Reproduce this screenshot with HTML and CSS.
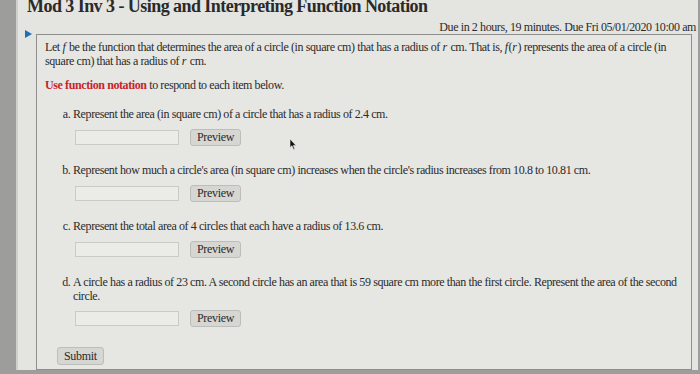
FILE: index.html
```html
<!DOCTYPE html>
<html lang="en">
<head>
    <meta charset="UTF-8">
    <title>Mod 3 Inv 3 - Using and Interpreting Function Notation</title>
    <link rel="stylesheet" href="styles.css">
</head>
<body>
    <div class="page">
        <h1 class="title">Mod 3 Inv 3 - Using and Interpreting Function Notation</h1>

        <div class="due-row">
            <span class="toggle"></span>
            <span class="due">Due in 2 hours, 19 minutes. Due Fri 05/01/2020 10:00 am</span>
        </div>

        <div class="question">
            <p class="intro">Let <i>f</i> be the function that determines the area of a circle (in square cm) that has a radius of <i>r</i> cm. That is, <i>f</i>(<i>r</i>) represents the area of a circle (in square cm) that has a radius of <i>r</i> cm.</p>

            <p class="instruct"><b class="red">Use function notation</b> to respond to each item below.</p>

            <ol class="parts">
                <li>
                    <p>Represent the area (in square cm) of a circle that has a radius of 2.4 cm.</p>
                    <div class="answer">
                        <input type="text" class="ans-input" aria-label="Answer a">
                        <button class="btn">Preview</button>
                    </div>
                </li>
                <li>
                    <p>Represent how much a circle's area (in square cm) increases when the circle's radius increases from 10.8 to 10.81 cm.</p>
                    <div class="answer">
                        <input type="text" class="ans-input" aria-label="Answer b">
                        <button class="btn">Preview</button>
                    </div>
                </li>
                <li>
                    <p>Represent the total area of 4 circles that each have a radius of 13.6 cm.</p>
                    <div class="answer">
                        <input type="text" class="ans-input" aria-label="Answer c">
                        <button class="btn">Preview</button>
                    </div>
                </li>
                <li class="last">
                    <p>A circle has a radius of 23 cm. A second circle has an area that is 59 square cm more than the first circle. Represent the area of the second circle.</p>
                    <div class="answer">
                        <input type="text" class="ans-input" aria-label="Answer d">
                        <button class="btn">Preview</button>
                    </div>
                </li>
            </ol>

            <button class="btn submit">Submit</button>
        </div>
    </div>

    <!-- mouse pointer caught in the shot -->
    <svg class="pointer" width="8" height="11" viewBox="0 0 8 11" aria-hidden="true">
        <path d="M1 0 L1 8.5 L3 6.8 L4.6 10.4 L5.8 9.9 L4.3 6.4 L7 6.4 Z" fill="#111" stroke="#eee" stroke-width="0.6"/>
    </svg>
</body>
</html>
```

FILE: styles.css
```css
* {
    margin: 0;
    padding: 0;
    box-sizing: border-box;
}

body {
    font-family: 'Liberation Serif', 'Times New Roman', serif;
    color: #2b2b2b;
    background-color: #9d9d9b;
    height: 374px;
    overflow: hidden;
    position: relative;
}

.page {
    margin-left: 16px;
    margin-right: 2px;
    height: 374px;
    padding: 0 6px 0 6px;
    background-color: #e4e4e0;
    border-left: 2px solid #cfcfcb;
}

.title {
    font-size: 18px;
    line-height: 20px;
    letter-spacing: -0.55px;
    margin-top: -4px;
    margin-left: 3px;
    color: #2a2a2a;
}

.due-row {
    display: flex;
    align-items: flex-end;
    justify-content: space-between;
    height: 18px;
}

.toggle {
    width: 0;
    height: 0;
    border-top: 4px solid transparent;
    border-bottom: 4px solid transparent;
    border-left: 7px solid #1f6fb8;
    margin-left: 1px;
    margin-bottom: -4px;
}

.due {
    font-size: 12px;
    line-height: 14px;
    letter-spacing: -0.4px;
    margin-right: -4px;
}

.question {
    margin-left: 12px;
    border: 1px solid #8e8e8c;
    background-color: #e6e6e2;
    padding: 5px 6px 0 8px;
    height: 336px;
    font-size: 12px;
    line-height: 14px;
    letter-spacing: -0.4px;
}

.question i {
    margin-right: 1px;
}

.intro {
    margin-bottom: 10px;
}

.red {
    color: #c8242b;
}

.parts {
    list-style: lower-alpha;
    padding-left: 28px;
    margin-top: 15px;
}

.parts li {
    margin-bottom: 17px;
}

.parts li.last {
    margin-bottom: 20px;
}

.answer {
    display: flex;
    align-items: center;
    gap: 11px;
    margin-top: 8px;
    margin-left: 2px;
}

.parts li.last .answer {
    margin-top: 7px;
}

.ans-input {
    width: 104px;
    height: 15px;
    border: 1px solid #cacac6;
    background-color: #ebebe8;
}

.btn {
    font-family: 'Liberation Serif', 'Times New Roman', serif;
    font-size: 12px;
    letter-spacing: -0.3px;
    color: #2b2b2b;
    height: 17px;
    padding: 0 6px;
    border: 1px solid #bdbdb9;
    border-radius: 3px;
    background-color: #d6d6d3;
}

.submit {
    margin-left: 12px;
    height: 18px;
}

.pointer {
    position: absolute;
    left: 289px;
    top: 139px;
}
```
